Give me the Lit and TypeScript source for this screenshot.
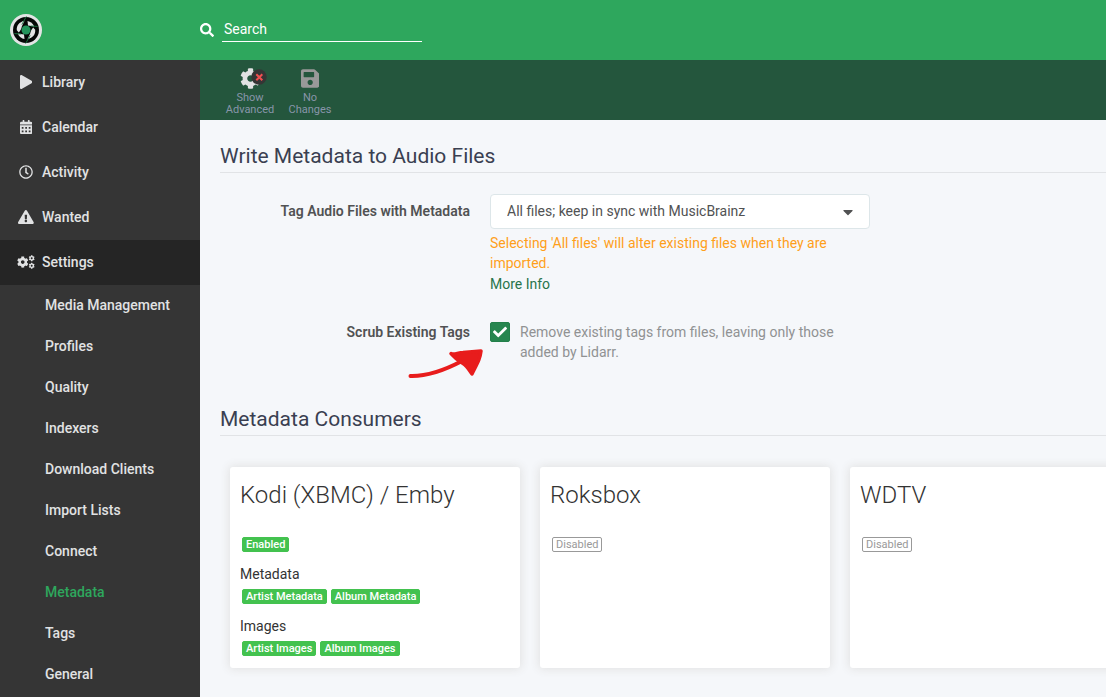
import { LitElement, html, css, svg } from "lit";
import { customElement } from "lit/decorators.js";
import { classMap } from "lit/directives/class-map.js";

const COG =
  "M487.4 315.7l-42.6-24.6c4.3-23.2 4.3-47 0-70.2l42.6-24.6c4.9-2.8 7.1-8.6 5.5-14-11.1-35.6-30-67.8-54.7-94.6-3.8-4.1-10-5.1-14.8-2.3L380.8 110c-17.9-15.4-38.5-27.3-60.8-35.1V25.8c0-5.6-3.9-10.5-9.4-11.7-36.7-8.2-74.3-7.8-109.2 0-5.5 1.2-9.4 6.1-9.4 11.7V75c-22.2 7.9-42.8 19.8-60.8 35.1L88.7 85.5c-4.9-2.8-11-1.9-14.8 2.3-24.7 26.7-43.6 58.9-54.7 94.6-1.7 5.4.6 11.2 5.5 14L67.3 221c-4.3 23.2-4.3 47 0 70.2l-42.6 24.6c-4.9 2.8-7.1 8.6-5.5 14 11.1 35.6 30 67.8 54.7 94.6 3.8 4.1 10 5.1 14.8 2.3l42.6-24.6c17.9 15.4 38.5 27.3 60.8 35.1v49.2c0 5.6 3.9 10.5 9.4 11.7 36.7 8.2 74.3 7.8 109.2 0 5.5-1.2 9.4-6.1 9.4-11.7v-49.2c22.2-7.9 42.8-19.8 60.8-35.1l42.6 24.6c4.9 2.8 11 1.9 14.8-2.3 24.7-26.7 43.6-58.9 54.7-94.6 1.5-5.5-.7-11.3-5.6-14.1zM256 336c-44.1 0-80-35.9-80-80s35.9-80 80-80 80 35.9 80 80-35.9 80-80 80z";
const SEARCH =
  "M505 442.7L405.3 343c-4.5-4.5-10.6-7-17-7H372c27.6-35.3 44-79.7 44-128C416 93.1 322.9 0 208 0S0 93.1 0 208s93.1 208 208 208c48.3 0 92.7-16.4 128-44v16.3c0 6.4 2.5 12.5 7 17l99.7 99.7c9.4 9.4 24.6 9.4 33.9 0l28.3-28.3c9.4-9.4 9.4-24.6.1-34zM208 336c-70.7 0-128-57.2-128-128 0-70.7 57.2-128 128-128 70.7 0 128 57.2 128 128 0 70.7-57.2 128-128 128z";
const PLAY =
  "M424.4 214.7L72.4 6.6C43.8-10.3 0 6.1 0 47.9V464c0 37.5 40.7 60.1 72.4 41.3l352-208c31.4-18.5 31.5-64.1 0-82.6z";
const CALENDAR =
  "M0 464c0 26.5 21.500 48 48 48h352c26.500 0 48-21.500 48-48V192H0zM64 256h64v64H64zM192 256h64v64h-64zM320 256h64v64h-64zM64 384h64v64H64zM192 384h64v64h-64zM320 384h64v64h-64zM400 64h-48V16c0-8.800-7.200-16-16-16h-32c-8.800 0-16 7.200-16 16v48H160V16c0-8.800-7.200-16-16-16h-32c-8.800 0-16 7.200-16 16v48H48C21.500 64 0 85.500 0 112v48h448v-48c0-26.500-21.500-48-48-48z";
const CLOCK =
  "M256 8C119 8 8 119 8 256s111 248 248 248 248-111 248-248S393 8 256 8zm0 448c-110.5 0-200-89.5-200-200S145.5 56 256 56s200 89.5 200 200-89.5 200-200 200zm61.8-104.4l-84.9-61.7c-3.1-2.3-4.9-5.9-4.9-9.7V116c0-6.6 5.4-12 12-12h32c6.6 0 12 5.4 12 12v141.7l66.8 48.6c5.4 3.9 6.5 11.4 2.6 16.8L334.6 349c-3.9 5.3-11.4 6.5-16.8 2.6z";
const WARNING =
  "M569.517 440.013C587.975 472.007 564.806 512 527.94 512H48.054c-36.937 0-59.999-40.055-41.577-71.987L246.423 23.985c18.467-32.009 64.72-31.951 83.154 0l239.94 416.028zM288 354c-25.405 0-46 20.595-46 46s20.595 46 46 46 46-20.595 46-46-20.595-46-46-46zm-43.673-165.346l7.418 136c.347 6.364 5.609 11.346 11.982 11.346h48.546c6.373 0 11.635-4.982 11.982-11.346l7.418-136c.375-6.874-5.098-12.654-11.982-12.654h-63.383c-6.884 0-12.356 5.78-11.981 12.654z";
const SAVE =
  "M433.941 129.941l-83.882-83.882A48 48 0 0 0 316.118 32H48C21.49 32 0 53.49 0 80v352c0 26.51 21.49 48 48 48h352c26.51 0 48-21.49 48-48V163.882a48 48 0 0 0-14.059-33.941zM224 416c-35.346 0-64-28.654-64-64 0-35.346 28.654-64 64-64s64 28.654 64 64c0 35.346-28.654 64-64 64zm96-304.52V212c0 6.627-5.373 12-12 12H76c-6.627 0-12-5.373-12-12V108c0-6.627 5.373-12 12-12h228.52c3.183 0 6.235 1.264 8.485 3.515l3.48 3.48A11.996 11.996 0 0 1 320 111.48z";
const CHECK =
  "M173.898 439.404l-166.4-166.4c-9.997-9.997-9.997-26.206 0-36.204l36.203-36.204c9.997-9.998 26.207-9.998 36.204 0L192 312.69 432.095 72.596c9.997-9.997 26.207-9.997 36.204 0l36.203 36.204c9.997 9.997 9.997 26.206 0 36.204l-294.4 294.401c-9.998 9.997-26.207 9.997-36.204-.001z";
const CARET =
  "M31.3 192h257.3c17.8 0 26.7 21.5 14.1 34.1L174.1 354.8c-7.8 7.8-20.5 7.8-28.3 0L17.2 226.1C4.6 213.5 13.5 192 31.3 192z";

const shape = (width: number, path: string, size = 14) => html`
  <svg viewBox="0 0 ${width} 512" width=${(width / 512) * size} height=${size} aria-hidden="true">
    <path fill="currentColor" fill-rule="evenodd" d=${path}></path>
  </svg>
`;

const cogs = html`
  <svg viewBox="0 0 640 512" width="18" height="14" aria-hidden="true">
    <g fill="currentColor">
      <path transform="translate(-12 46) scale(.83)" d=${COG}></path>
      <path transform="translate(416 6) scale(.44)" d=${COG}></path>
      <path transform="translate(416 282) scale(.44)" d=${COG}></path>
    </g>
  </svg>
`;

const blades = (angle: number) => svg`
  <g transform="rotate(${angle} 16 16)">
    <path fill="#e3e4e5" d="M6.800 16.200C6.400 11.500 9 8.200 14.500 6.800L11.800 12.400C11.600 14.200 10.500 16.500 8.800 18.500z"></path>
    <path fill="#e3e4e5" d="M17.500 7C20.500 7.600 23 9.400 24.200 12.600L18 11.400z"></path>
    <path fill="none" stroke="#1d7a45" stroke-width=".9" d="M16.400 2.400L11.800 10.600M27.600 12.400L20.800 12"></path>
  </g>
`;

const logo = html`
  <svg viewBox="0 0 32 32" width="32" height="32" aria-hidden="true">
    <circle cx="16" cy="16" r="16" fill="#e3e4e5"></circle>
    <circle cx="16" cy="16" r="13" fill="#050706"></circle>
    ${[0, 180].map(blades)}
    <circle cx="16" cy="16" r="4.500" fill="#22935a"></circle>
  </svg>
`;

const NAV = [
  { label: "Library", icon: shape(448, PLAY) },
  { label: "Calendar", icon: shape(448, CALENDAR) },
  { label: "Activity", icon: shape(512, CLOCK) },
  { label: "Wanted", icon: shape(576, WARNING) },
  { label: "Settings", icon: cogs, active: true },
];

const SETTINGS = [
  "Media Management",
  "Profiles",
  "Quality",
  "Indexers",
  "Download Clients",
  "Import Lists",
  "Connect",
  "Metadata",
  "Tags",
  "General",
];

const CONSUMERS = [
  {
    name: "Kodi (XBMC) / Emby",
    enabled: true,
    sections: [
      { title: "Metadata", tags: ["Artist Metadata", "Album Metadata"] },
      { title: "Images", tags: ["Artist Images", "Album Images"] },
    ],
  },
  { name: "Roksbox", enabled: false, sections: [] },
  { name: "WDTV", enabled: false, sections: [] },
];

@customElement("app-root")
export class AppRoot extends LitElement {
  static styles = css`
    :host {
      display: flex;
      flex-direction: column;
      height: 100vh;
      overflow: hidden;
      background: #f5f7fa;
      color: #515253;
      font: 14px/20px Roboto, "Liberation Sans", sans-serif;
    }
    * {
      box-sizing: border-box;
    }
    svg {
      display: block;
      flex: none;
    }
    a {
      color: inherit;
      text-decoration: none;
    }
    .header {
      display: flex;
      flex: none;
      align-items: center;
      height: 60px;
      background: #2ea75d;
      color: #fff;
    }
    .brand {
      flex: none;
      width: 200px;
      padding-left: 10px;
    }
    .search {
      display: flex;
      align-items: center;
      gap: 8px;
    }
    .search-input {
      width: 200px;
      height: 24px;
      padding: 0 2px 2px;
      border: 0;
      border-bottom: 1px solid #fff;
      border-radius: 0;
      outline: 0;
      background: none;
      color: #fff;
      font: inherit;
    }
    .search-input::placeholder {
      color: #fff;
      opacity: 1;
    }
    .body {
      display: flex;
      flex: 1;
      min-height: 0;
    }
    .sidebar {
      flex: none;
      width: 200px;
      overflow: hidden;
      background: #353535;
      color: #e1e2e3;
      font-weight: 500;
    }
    .nav-link {
      display: flex;
      align-items: center;
      height: 45px;
      padding: 0 0 1px 17px;
      gap: 7px;
    }
    .nav-link.active {
      background: #252525;
    }
    .nav-icon {
      display: flex;
      justify-content: center;
      width: 18px;
    }
    .sub-link {
      display: flex;
      align-items: center;
      height: 41px;
      padding: 0 0 2px 45px;
    }
    .sub-link.active {
      color: #2ea75d;
    }
    .page {
      display: flex;
      flex: 1;
      flex-direction: column;
      min-width: 0;
    }
    .toolbar {
      display: flex;
      flex: none;
      height: 60px;
      padding-left: 20px;
      background: #24563d;
      color: #e1e2e3;
    }
    .tool {
      display: flex;
      flex-direction: column;
      align-items: center;
      width: 60px;
      padding: 8px 5px 0;
      gap: 3px;
      border: 0;
      background: none;
      color: inherit;
      font: 11px/12px Roboto, "Liberation Sans", sans-serif;
    }
    .tool:disabled {
      color: #999;
    }
    .tool-icon {
      position: relative;
      display: flex;
      align-items: center;
      height: 21px;
    }
    .tool-badge {
      position: absolute;
      top: 1px;
      left: 11px;
    }
    .tool-label {
      color: #8895aa;
    }
    .content {
      flex: 1;
      padding: 20px 0 0 20px;
      overflow: hidden;
    }
    .fieldset {
      min-width: 0;
      margin: 0 0 41px;
      padding: 0;
      border: 0;
    }
    .legend {
      display: block;
      width: 100%;
      margin: 0 0 21px;
      padding: 0;
      border-bottom: 1px solid #e1e3e6;
      color: #3a3f51;
      font-size: 21px;
      font-weight: 400;
      line-height: 32px;
    }
    .group {
      display: flex;
      gap: 20px;
      margin-bottom: 28px;
    }
    .group:last-child {
      margin-bottom: 0;
    }
    .group-label {
      flex: none;
      width: 250px;
      font-weight: 600;
      text-align: right;
    }
    .group-label.tall {
      line-height: 35px;
    }
    .control {
      width: 380px;
    }
    .select-wrap {
      display: grid;
      align-items: center;
      margin-bottom: 4px;
    }
    .select {
      grid-area: 1 / 1;
      width: 100%;
      height: 35px;
      padding: 0 16px 2px;
      appearance: none;
      border: 1px solid #dde6e9;
      border-radius: 4px;
      background: #fff;
      color: #515253;
      font: inherit;
    }
    .caret {
      grid-area: 1 / 1;
      justify-self: end;
      margin-right: 17px;
      pointer-events: none;
    }
    .warning {
      margin-bottom: 1px;
      color: #ff9f1a;
    }
    .more {
      color: #28744c;
    }
    .check-row {
      position: relative;
      display: flex;
      gap: 10px;
      color: #909293;
    }
    .check-wrap {
      display: grid;
      flex: none;
      place-items: center;
      width: 20px;
      height: 20px;
      color: #fff;
    }
    .checkbox {
      grid-area: 1 / 1;
      width: 20px;
      height: 20px;
      margin: 0;
      appearance: none;
      border: 1px solid #ccc;
      border-radius: 2px;
      background: #fff;
    }
    .checkbox:checked {
      border-color: #23804a;
      background: #27864f;
    }
    .check-mark {
      grid-area: 1 / 1;
      z-index: 1;
      pointer-events: none;
    }
    .arrow {
      position: absolute;
      top: 24px;
      left: -84px;
      pointer-events: none;
    }
    .cards {
      display: flex;
      gap: 20px;
      padding: 10px 10px 20px;
    }
    .card {
      flex: none;
      width: 290px;
      min-height: 201px;
      padding: 10px;
      border-radius: 3px;
      background: #fff;
      box-shadow: 0 0 10px 1px #e1e1e1;
      color: #3a3f51;
    }
    .card-name {
      margin: 0 0 24px;
      color: #333;
      font-size: 24px;
      font-weight: 300;
      line-height: 36px;
    }
    .tags {
      display: flex;
      gap: 4px;
      padding: 0 2px;
    }
    .tag {
      padding: 1px 3px;
      border: 1px solid #43c24f;
      border-radius: 2px;
      background: #43c24f;
      color: #fff;
      font-size: 11px;
      font-weight: 500;
      line-height: 11px;
    }
    .tag.off {
      border-color: #999;
      background: #fff;
      color: #999;
      font-weight: 400;
    }
    .card-section {
      margin: 12px 0 5px;
      color: #333;
      font-size: 14px;
      font-weight: 400;
      line-height: 20px;
    }
  `;

  render() {
    return html`
      <header class="header">
        <a class="brand" href="#" aria-label="Lidarr">${logo}</a>
        <label class="search">
          ${shape(512, SEARCH)}
          <input class="search-input" type="text" placeholder="Search" aria-label="Search" />
        </label>
      </header>
      <div class="body">
        <nav class="sidebar">
          ${NAV.map(
            (item) => html`
              <a class=${classMap({ "nav-link": true, active: !!item.active })} href="#">
                <span class="nav-icon">${item.icon}</span>${item.label}
              </a>
            `
          )}
          ${SETTINGS.map(
            (label) => html`
              <a class=${classMap({ "sub-link": true, active: label === "Metadata" })} href="#">${label}</a>
            `
          )}
        </nav>
        <div class="page">
          <div class="toolbar">
            <button class="tool" type="button">
              <span class="tool-icon">
                ${shape(512, COG, 21)}
                <svg class="tool-badge" viewBox="0 0 16 16" width="16" height="16" aria-hidden="true">
                  <circle cx="8" cy="8" r="7.700" fill="#353535"></circle>
                  <path d="M5.300 5.200L11.300 11.200M11.300 5.200L5.300 11.200" stroke="#f05050" stroke-width="2"></path>
                </svg>
              </span>
              <span class="tool-label">Show Advanced</span>
            </button>
            <button class="tool" type="button" disabled>
              <span class="tool-icon">${shape(448, SAVE, 21)}</span>
              <span class="tool-label">No Changes</span>
            </button>
          </div>
          <main class="content">
            <fieldset class="fieldset">
              <legend class="legend">Write Metadata to Audio Files</legend>
              <div class="group">
                <label class="group-label tall" for="write">Tag Audio Files with Metadata</label>
                <div class="control">
                  <div class="select-wrap">
                    <select class="select" id="write">
                      <option>All files; keep in sync with MusicBrainz</option>
                    </select>
                    <span class="caret">${shape(320, CARET, 16)}</span>
                  </div>
                  <div class="warning">Selecting 'All files' will alter existing files when they are imported.</div>
                  <a class="more" href="#">More Info</a>
                </div>
              </div>
              <div class="group">
                <label class="group-label" for="scrub">Scrub Existing Tags</label>
                <div class="control check-row">
                  <span class="check-wrap">
                    <input class="checkbox" id="scrub" type="checkbox" checked />
                    <span class="check-mark">${shape(512, CHECK)}</span>
                  </span>
                  <span>Remove existing tags from files, leaving only those added by Lidarr.</span>
                  <svg class="arrow" viewBox="0 0 80 34" width="80" height="34" aria-hidden="true">
                    <path
                      d="M4.500 30C22 30.500 38 24.500 56 15"
                      fill="none"
                      stroke="#e81c1c"
                      stroke-width="4"
                      stroke-linecap="round"
                    ></path>
                    <path
                      d="M45 7.500C48 9.500 52 6.500 57 6.500L75 5C74 13 72 16 66 28 63 24 61 20 57 17.500 53 15 48 11 45 7.500Z"
                      fill="#e81c1c"
                      stroke="#e81c1c"
                      stroke-width="3.500"
                      stroke-linejoin="round"
                    ></path>
                  </svg>
                </div>
              </div>
            </fieldset>
            <fieldset class="fieldset">
              <legend class="legend">Metadata Consumers</legend>
              <div class="cards">
                ${CONSUMERS.map(
                  (item) => html`
                    <article class="card">
                      <h3 class="card-name">${item.name}</h3>
                      <div class="tags">
                        <span class=${classMap({ tag: true, off: !item.enabled })}
                          >${item.enabled ? "Enabled" : "Disabled"}</span
                        >
                      </div>
                      ${item.sections.map(
                        (section) => html`
                          <h4 class="card-section">${section.title}</h4>
                          <div class="tags">${section.tags.map((tag) => html`<span class="tag">${tag}</span>`)}</div>
                        `
                      )}
                    </article>
                  `
                )}
              </div>
            </fieldset>
          </main>
        </div>
      </div>
    `;
  }
}
